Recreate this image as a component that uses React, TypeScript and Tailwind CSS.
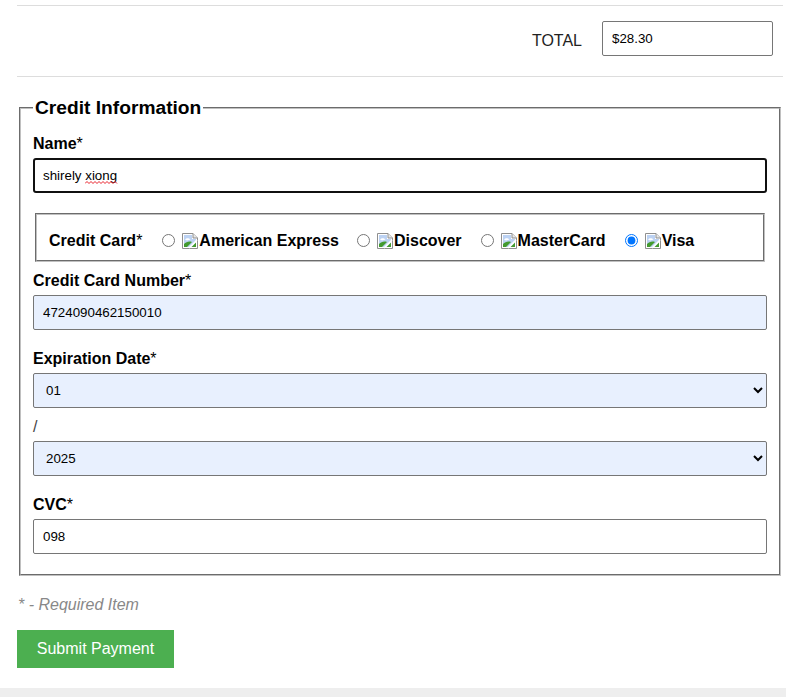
// App.tsx
const field =
  "block w-full h-[35px] rounded-[2px] border border-[#767676] px-[9px] text-[13.333px] text-black outline-none";
const pick =
  "block w-full h-[35px] rounded-[2px] border border-[#767676] pl-[8px] pr-[9px] text-[13.333px] text-black outline-none bg-[#e8f0fe]";
const label = "text-[16px] leading-[18px] font-bold";

function BrokenImage() {
  return (
    <svg width="16" height="16" viewBox="0 0 16 16" className="shrink-0">
      <path d="M0.5 0.5H11L15.5 5V15.5H0.5Z" fill="#fff" stroke="#8f8f8f" />
      <path d="M11 0.5V5H15.5" fill="#e8e8e8" stroke="#8f8f8f" />
      <path d="M2 2H10V6H14V9L9 14H2Z" fill="#bcd2f3" />
      <path d="M3 6.5C4.5 4.6 7 4.8 8.5 6.5L5 7.5Z" fill="#fff" />
      <path d="M2 14V11C4 9 7 8 10 9L5 14Z" fill="#439a30" />
      <path d="M9.5 14L14 9.5V14Z" fill="#439a30" />
      <path d="M15 7L7 15" stroke="#fff" strokeWidth="1.6" />
    </svg>
  );
}

function CardOption({ name, checked }: { name: string; checked?: boolean }) {
  return (
    <label className="flex items-center first:mr-[-1px]">
      <input
        type="radio"
        name="card"
        defaultChecked={checked}
        className="w-[13px] h-[13px] mr-[7px]"
      />
      <BrokenImage />
      <span className="ml-px">{name}</span>
    </label>
  );
}

export default function App() {
  return (
    <div className="h-[697px] w-[786px] overflow-hidden bg-white flex flex-col font-['Liberation_Sans',Arial,sans-serif] text-black">
      <div className="flex-1 pl-[17px] pr-[3px] pt-[5px]">
        <div className="border-t border-[#ddd]" />
        <div className="flex items-center justify-end h-[71px] border-b border-[#ddd] pr-[10px] pb-[6px]">
          <span className="text-[16px] text-[#222] mr-[20px] mt-[5px]">TOTAL</span>
          <input
            defaultValue="$28.30"
            className="w-[171px] h-[35px] rounded-[2px] border border-[#767676] px-[9px] text-[13.333px] outline-none"
          />
        </div>

        <fieldset className="mt-[19px] mx-[2px] w-[762px] border-2 border-[#c0c0c0] [border-style:groove] px-[12px] pb-[20px]">
          <legend className="px-[2px] text-[19.2px] leading-[23px] font-bold">Credit Information</legend>

          <div className={`mt-[16px] ${label}`}>
            Name<span className="font-normal">*</span>
          </div>
          <div className="relative mt-[5px]">
            <input
              defaultValue="shirely xiong"
              spellCheck={false}
              className="block w-full h-[35px] rounded-[3px] border-2 border-[#101010] px-[8px] text-[13.333px] outline-none"
            />
            <svg width="33" height="3" viewBox="0 0 33 3" className="absolute left-[52px] top-[23px]">
              <path
                d="M0 2.5L2 0.5L4 2.5L6 0.5L8 2.5L10 0.5L12 2.5L14 0.5L16 2.5L18 0.5L20 2.5L22 0.5L24 2.5L26 0.5L28 2.5L30 0.5L32 2.5"
                fill="none"
                stroke="#e8202a"
                strokeWidth="1"
              />
            </svg>
          </div>

          <fieldset className="mt-[20px] mx-[2px] h-[49px] border-2 border-[#c0c0c0] [border-style:groove] pl-[12px] flex items-center text-[16px] font-bold">
            <div className="flex items-center h-full pt-[6px]">
              <span className="mr-[20px]">
                Credit Card<span className="font-normal">*</span>
              </span>
              <div className="flex items-center gap-[19px]">
                <CardOption name="American Express" />
                <CardOption name="Discover" />
                <CardOption name="MasterCard" />
                <CardOption name="Visa" checked />
              </div>
            </div>
          </fieldset>

          <div className={`mt-[10px] ${label}`}>
            Credit Card Number<span className="font-normal">*</span>
          </div>
          <input defaultValue="4724090462150010" className={`${field} mt-[5px] bg-[#e8f0fe]`} />

          <div className={`mt-[20px] ${label}`}>
            Expiration Date<span className="font-normal">*</span>
          </div>
          <select defaultValue="01" className={`${pick} mt-[5px]`}>
            <option>01</option>
          </select>
          <div className="mt-[10px] text-[16px] leading-[18px] text-[#444]">/</div>
          <select defaultValue="2025" className={`${pick} mt-[5px]`}>
            <option>2025</option>
          </select>

          <div className={`mt-[20px] ${label}`}>
            CVC<span className="font-normal">*</span>
          </div>
          <input defaultValue="098" className={`${field} mt-[5px]`} />
        </fieldset>

        <p className="mt-[20px] mx-[1px] text-[16px] leading-[18px] italic text-[#888]">* - Required Item</p>
        <button className="block mt-[16px] w-[157px] h-[38px] bg-[#4caf50] text-white text-[16px]">
          Submit Payment
        </button>
      </div>
      <div className="h-[9px] bg-[#eee]" />
    </div>
  );
}
